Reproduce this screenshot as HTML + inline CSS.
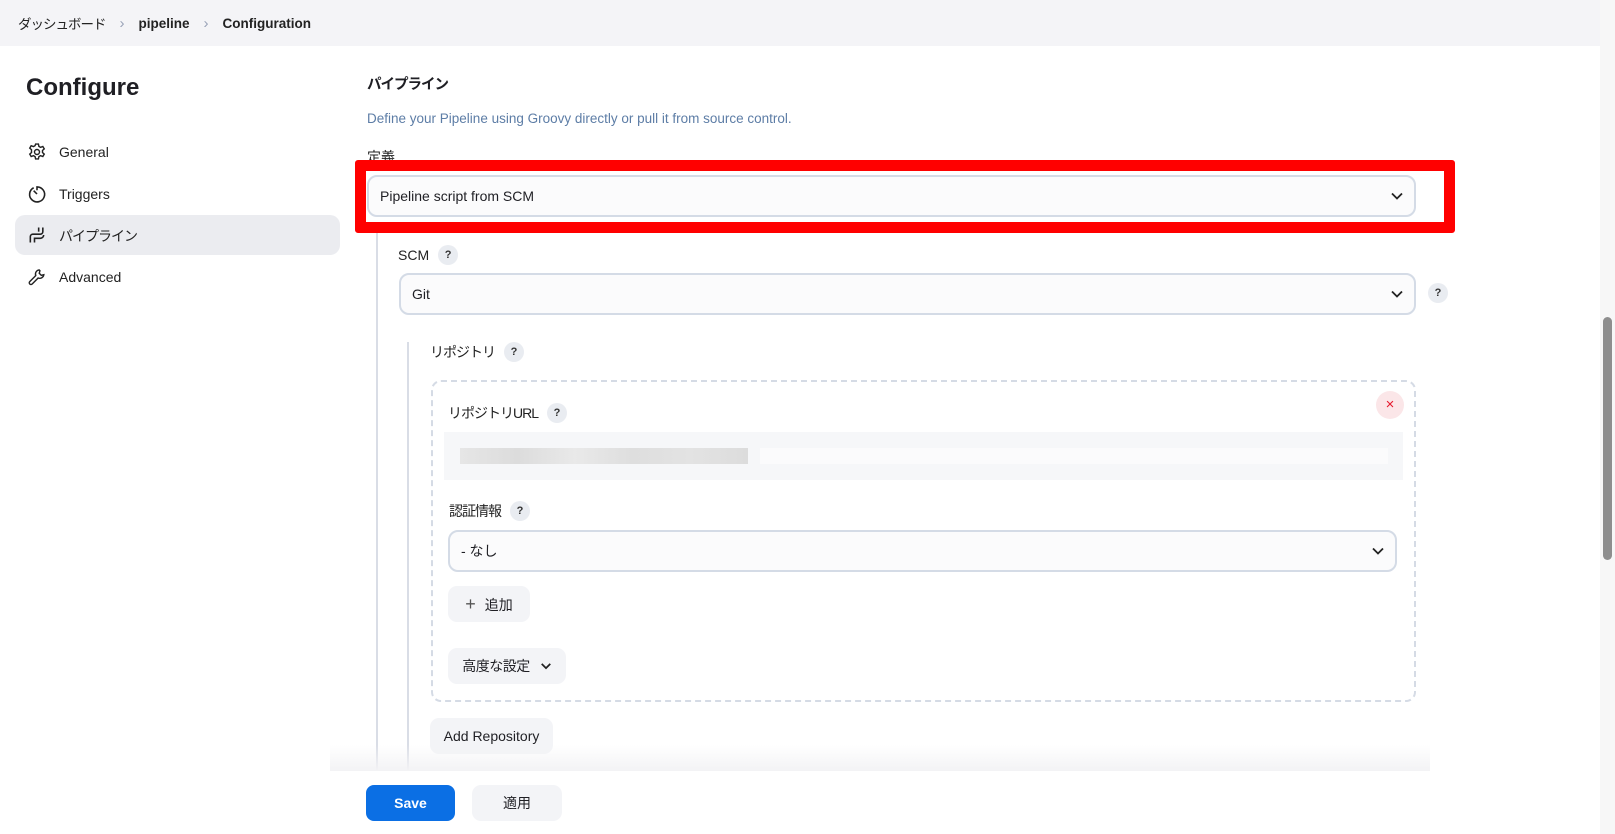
<!DOCTYPE html>
<html><head><meta charset="utf-8">
<style>
*{box-sizing:border-box;margin:0;padding:0}
body{width:1615px;height:834px;overflow:hidden;background:#fff;font-family:"Liberation Sans","Noto Sans CJK JP",sans-serif;color:#1f1f24;position:relative;font-size:14px}
.a{position:absolute}
.jp{letter-spacing:-1px}
.hdr{left:0;top:0;width:1600px;height:46px;background:#f4f4f7}
.bcrow{left:18px;top:13px;display:flex;align-items:center;gap:14px;font-size:13.5px;color:#222;height:20px}
.sep{color:#9aa3b8;font-size:15px}
.nav{left:59px;font-size:14px;color:#222}
.ic{left:27px;width:20px;height:20px}
.row{display:flex;align-items:center;gap:9px;height:22px}
.q{width:20px;height:20px;flex:none;border-radius:50%;background:#e9ecf1;font-size:11px;font-weight:bold;text-align:center;line-height:20px;color:#333;letter-spacing:0}
.sel{background:#fbfbfc;border:2px solid #d4dbe6;border-radius:10px;font-size:14px;padding-left:11px;line-height:38px}
.chev{width:14px;height:14px}
.btn{background:#f3f4f7;border-radius:9px;font-size:14px;text-align:center}
.lbl{font-size:14px;color:#222}
</style></head><body>
<div class="a hdr"></div>
<div class="a bcrow"><span class="jp">ダッシュボード</span><span class="sep">›</span><b>pipeline</b><span class="sep">›</span><b>Configuration</b></div>

<div class="a" style="left:1600px;top:0;width:15px;height:834px;background:#f7f7f7"></div>
<div class="a" style="left:1603px;top:317px;width:9px;height:243px;background:#8e8e8e;border-radius:5px"></div>

<div class="a" style="left:26px;top:74px;font-size:24px;font-weight:bold">Configure</div>
<div class="a" style="left:15px;top:215px;width:325px;height:40px;background:#ebecf0;border-radius:10px"></div>
<svg class="a ic" style="top:142px" viewBox="0 0 24 24" fill="none" stroke="#222" stroke-width="1.7"><path d="M10.3 2.5h3.4l.6 2.8 2 1.1 2.7-1 1.7 2.9-2.1 1.9v2.4l2.1 1.9-1.7 2.9-2.7-1-2 1.1-.6 2.8h-3.4l-.6-2.8-2-1.100-2.7 1-1.7-2.9 2.1-1.9V9.3L3.3 7.4 5 4.5l2.7 1 2-1.1z"/><circle cx="12" cy="12" r="3"/></svg>
<div class="a nav" style="top:144px">General</div>
<svg class="a ic" style="top:184px" viewBox="0 0 24 24" fill="none" stroke="#222" stroke-width="1.9"><path d="M8 4.5A9 9 0 1 0 12 3.5v4"/><path d="M8 8l4 4"/></svg>
<div class="a nav" style="top:186px">Triggers</div>
<svg class="a ic" style="top:225px" viewBox="0 0 24 24" fill="none" stroke="#222" stroke-width="1.9"><path d="M4 21v-7a3 3 0 0 1 3-3h9a3 3 0 0 0 3-3V3"/><path d="M9 21v-5h7a4 4 0 0 0 4-4"/><path d="M14 3v5"/></svg>
<div class="a nav jp" style="top:226px">パイプライン</div>
<svg class="a ic" style="top:267px" viewBox="0 0 24 24" fill="none" stroke="#222" stroke-width="1.7"><path d="M14.5 3.5a5 5 0 0 0-4 6.8L3.3 17.5a2 2 0 0 0 2.9 2.9l7.2-7.2a5 5 0 0 0 6.8-4l-3 .8-2.5-2.5.8-3z"/></svg>
<div class="a nav" style="top:269px">Advanced</div>

<div class="a jp" style="left:367px;top:73px;font-size:14.5px;font-weight:bold">パイプライン</div>
<div class="a" style="left:367px;top:111px;font-size:13.5px;color:#5d7da6">Define your Pipeline using Groovy directly or pull it from source control.</div>
<div class="a lbl" style="left:367px;top:147px">定義</div>
<div class="a sel" style="left:367px;top:175px;width:1049px;height:42px">Pipeline script from SCM</div>
<svg class="a chev" style="left:1390px;top:189px" viewBox="0 0 14 14" fill="none" stroke="#222" stroke-width="1.8"><path d="M2 4.5l5 5 5-5"/></svg>
<div class="a" style="left:355px;top:160px;width:1100px;height:73px;border:11px solid #ff0000;border-radius:3px"></div>

<div class="a" style="left:376px;top:233px;width:2px;height:540px;background:#d9dde6"></div>
<div class="a" style="left:407px;top:342px;width:2px;height:430px;background:#d9dde6"></div>

<div class="a row lbl" style="left:398px;top:244px"><span>SCM</span><span class="q">?</span></div>
<div class="a sel" style="left:399px;top:273px;width:1017px;height:42px">Git</div>
<svg class="a chev" style="left:1390px;top:287px" viewBox="0 0 14 14" fill="none" stroke="#222" stroke-width="1.8"><path d="M2 4.5l5 5 5-5"/></svg>
<div class="a q" style="left:1428px;top:283px">?</div>

<div class="a row lbl" style="left:430px;top:341px"><span class="jp">リポジトリ</span><span class="q">?</span></div>
<div class="a" style="left:431px;top:380px;width:985px;height:322px;border:2px dashed #d5dbe5;border-radius:10px"></div>
<div class="a" style="left:1376px;top:391px;width:28px;height:28px;border-radius:50%;background:#fbe6e8;color:#e6192e;text-align:center;line-height:28px;font-size:15px">×</div>
<div class="a row lbl" style="left:448px;top:402px"><span class="jp">リポジトリURL</span><span class="q">?</span></div>
<div class="a" style="left:444px;top:432px;width:959px;height:48px;background:#f6f7f9"></div>
<div class="a" style="left:760px;top:448px;width:628px;height:16px;background:#fbfbfc"></div>
<div class="a" style="left:460px;top:448px;width:288px;height:16px;background:linear-gradient(90deg,#e6e6e6,#dcdcdc 20%,#e9e9e9 40%,#dedede 60%,#e3e3e3 80%,#dcdcdc)"></div>
<div class="a row lbl" style="left:449px;top:500px"><span class="jp">認証情報</span><span class="q">?</span></div>
<div class="a sel" style="left:448px;top:530px;width:949px;height:42px">- なし</div>
<svg class="a chev" style="left:1371px;top:544px" viewBox="0 0 14 14" fill="none" stroke="#222" stroke-width="1.8"><path d="M2 4.5l5 5 5-5"/></svg>
<div class="a btn" style="left:448px;top:586px;width:82px;height:36px;line-height:36px"><span style="color:#555;font-size:18px;margin-right:9px">+</span>追加</div>
<div class="a btn" style="left:448px;top:648px;width:118px;height:36px;line-height:36px;padding-right:22px;letter-spacing:-0.5px">高度な設定</div>
<svg class="a chev" style="left:540px;top:660px;width:12px;height:12px" viewBox="0 0 14 14" fill="none" stroke="#222" stroke-width="2"><path d="M2 4.5l5 5 5-5"/></svg>
<div class="a btn" style="left:430px;top:718px;width:123px;height:36px;line-height:36px">Add Repository</div>

<div class="a" style="left:330px;top:745px;width:1100px;height:26px;background:linear-gradient(#fff0,#f3f3f5)"></div>
<div class="a" style="left:340px;top:771px;width:1260px;height:63px;background:#fff"></div>
<div class="a" style="left:366px;top:785px;width:89px;height:36px;background:#0b6fe4;border-radius:8px;color:#fff;font-weight:bold;text-align:center;line-height:36px;font-size:14px">Save</div>
<div class="a btn" style="left:472px;top:785px;width:90px;height:36px;line-height:36px">適用</div>
</body></html>
